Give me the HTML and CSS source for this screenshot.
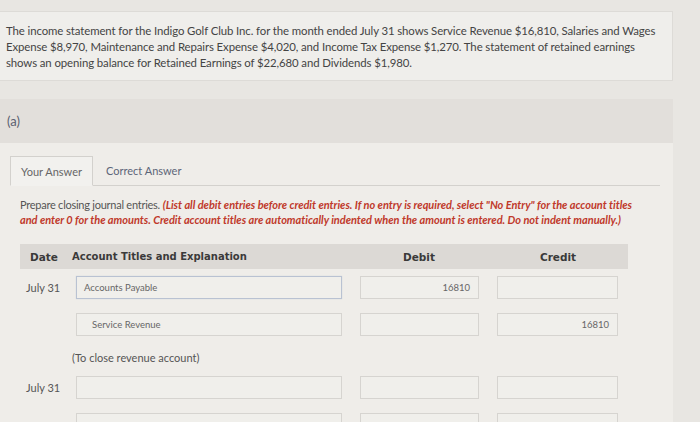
FILE: index.html
```html
<!DOCTYPE html>
<html>
<head>
<meta charset="utf-8">
<link rel="stylesheet" href="styles.css">
</head>
<body>
<div class="page">
  <div class="statement">
    The income statement for the Indigo Golf Club Inc. for the month ended July 31 shows Service Revenue $16,810, Salaries and Wages Expense $8,970, Maintenance and Repairs Expense $4,020, and Income Tax Expense $1,270. The statement of retained earnings shows an opening balance for Retained Earnings of $22,680 and Dividends $1,980.
  </div>
  <div class="part-band">(a)</div>
  <div class="panel">
    <div class="tabs">
      <div class="tab active">Your Answer</div>
      <div class="tab">Correct Answer</div>
    </div>
    <p class="instructions"><span class="plain">Prepare closing journal entries.</span> <em class="warn">(List all debit entries before credit entries. If no entry is required, select "No Entry" for the account titles and enter 0 for the amounts. Credit account titles are automatically indented when the amount is entered. Do not indent manually.)</em></p>
    <div class="journal">
      <div class="head">
        <div class="h-date">Date</div>
        <div class="h-acct">Account Titles and Explanation</div>
        <div class="h-num">Debit</div>
        <div class="h-num">Credit</div>
      </div>
      <div class="row first">
        <div class="date">July 31</div>
        <div class="cell-acct"><div class="field acct focused">Accounts Payable</div></div>
        <div class="cell-dr"><div class="field num">16810</div></div>
        <div class="cell-cr"><div class="field num"></div></div>
      </div>
      <div class="row">
        <div class="date"></div>
        <div class="cell-acct"><div class="field acct indent">Service Revenue</div></div>
        <div class="cell-dr"><div class="field num"></div></div>
        <div class="cell-cr"><div class="field num">16810</div></div>
      </div>
      <div class="explain">(To close revenue account)</div>
      <div class="row after-explain">
        <div class="date">July 31</div>
        <div class="cell-acct"><div class="field acct"></div></div>
        <div class="cell-dr"><div class="field num"></div></div>
        <div class="cell-cr"><div class="field num"></div></div>
      </div>
      <div class="row">
        <div class="date"></div>
        <div class="cell-acct"><div class="field acct"></div></div>
        <div class="cell-dr"><div class="field num"></div></div>
        <div class="cell-cr"><div class="field num"></div></div>
      </div>
    </div>
  </div>
</div>
</body>
</html>
```
FILE: styles.css
```css
html, body {
  margin: 0;
  padding: 0;
  height: 100%;
  overflow: hidden;
}
body {
  background: #e8e6e2;
  font-family: Lato, "Liberation Sans", sans-serif;
  color: #4a4a4a;
}
.page {
  width: 673px;
  padding-top: 11px;
}
.statement {
  background: #efeeeb;
  border: 1px solid #dddbd7;
  border-left: none;
  padding: 11px 8px 9px 6px;
  font-size: 11.4px;
  letter-spacing: -0.1px;
  line-height: 16px;
  height: 48px;
  color: #444;
}
.part-band {
  margin-top: 18px;
  height: 44px;
  background: #e2dfdb;
  padding-left: 7px;
  box-sizing: border-box;
  display: flex;
  align-items: center;
  font-size: 13px;
  color: #5a6070;
}
.panel {
  background: #efede9;
  height: 300px;
  padding-top: 13px;
}
.tabs {
  display: flex;
  margin: 0 13px 0 10px;
  border-bottom: 1px solid #d3d1cd;
  height: 29px;
}
.tab {
  font-size: 11px;
  padding: 0 13px;
  display: flex;
  align-items: center;
  color: #5c6578;
}
.tab.active {
  width: 83px;
  padding: 0;
  box-sizing: border-box;
  justify-content: center;
  background: #f2f1ee;
  border: 1px solid #d3d1cd;
  border-bottom: 1px solid #f2f1ee;
  margin-bottom: -1px;
  color: #666;
}
.instructions {
  margin: 11px 0 0 20px;
  width: 618px;
  font-size: 11px;
  line-height: 15px;
  color: #555;
}
.plain {
  letter-spacing: -0.25px;
}
.warn {
  color: #c0392b;
  font-weight: 700;
  font-style: italic;
  letter-spacing: -0.03px;
}
.journal {
  margin: 17px 0 0 20px;
  width: 608px;
}
.head {
  display: grid;
  grid-template-columns: 52px 278px 138px 140px;
  height: 25px;
  align-items: center;
  background: #dcd9d5;
  font-family: "DejaVu Sans", sans-serif;
  font-weight: 700;
  font-size: 10px;
  color: #3a3a3a;
}
.h-date { padding-left: 10px; font-size: 10.5px; }
.h-num { text-align: center; font-size: 10.5px; }
.row {
  display: grid;
  grid-template-columns: 52px 278px 138px 140px;
  align-items: center;
  margin-top: 14px;
  height: 23px;
}
.row.first { margin-top: 7px; }
.row.after-explain { margin-top: 11px; }
.date {
  padding-left: 6px;
  font-size: 11px;
  color: #555;
}
.field {
  height: 23px;
  box-sizing: border-box;
  border: 1px solid #d6d4d0;
  background: #f0efeb;
  font-size: 9.5px;
  color: #666;
  display: flex;
  align-items: center;
}
.acct {
  margin-left: 4px;
  width: 266px;
  padding-left: 7px;
}
.acct.indent { padding-left: 15px; }
.acct.focused {
  border-color: #b9c2d2;
  box-shadow: 0 0 1px #c8cfdc;
}
.cell-dr .field {
  margin-left: 10px;
  width: 119px;
}
.cell-cr .field {
  margin-left: 9px;
  width: 121px;
}
.num {
  justify-content: flex-end;
  padding-right: 8px;
}
.explain {
  margin: 14px 0 0 52px;
  font-size: 11px;
  line-height: 15px;
  color: #555;
  height: 15px;
}
```
